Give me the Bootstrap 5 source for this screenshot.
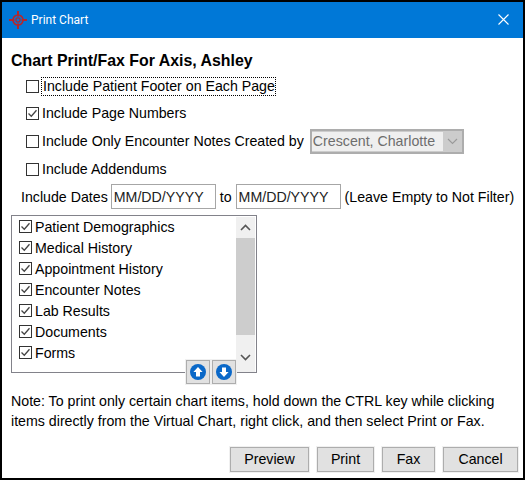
<!DOCTYPE html>
<html lang="en"><head><meta charset="utf-8"><title>Print Chart</title>
<link href="https://cdn.jsdelivr.net/npm/bootstrap@5.3.0/dist/css/bootstrap.min.css" rel="stylesheet">
<style>
html,body{height:100%;margin:0;background:#000;overflow:hidden}
body{font-family:"Liberation Sans",Arial,sans-serif;font-size:14.2px;color:#000;line-height:18px}
.win{margin:2px;width:521px;height:476px;background:#fff}
.tbar{height:36px;background:#0078d7;color:#fff;font-family:Roboto,"Noto Sans",sans-serif;font-size:12px;padding-left:7px}
.tbar .ttl{margin-left:4px}
.tbar .cls{margin-left:auto;margin-right:14px;margin-top:-2px}
.main{padding:0 5px 0 9px}
.head{font-size:15.9px;font-weight:700;margin:14px 0 0;line-height:18px;height:18px}
.opts{margin-top:3px;padding-left:15px}
.opt{height:28px}
.opt.o1{height:26px}
.cbx.form-check-input{appearance:none;width:13px;height:13px;margin:0 3px 0 0;border:1px solid #333;border-radius:0;background-color:#fff;flex:none}
.cbx.form-check-input:checked{background-color:#fff;border-color:#333;background-image:url("data:image/svg+xml,%3Csvg xmlns='http://www.w3.org/2000/svg' viewBox='0 0 11 11'%3E%3Cpath d='M1.500 5.500l2.800 2.800 5.200-6' fill='none' stroke='%23444' stroke-width='1.300'/%3E%3C/svg%3E");background-size:11px 11px;background-position:center}
.focusbox{outline:1px dotted #000;outline-offset:0;padding:0 0 0 1px;line-height:17px}
.picker{width:154px;height:25px;margin-left:6px;border:2px solid #adadad;background:#cccccc;color:#6d6d6d;position:relative;display:flex}
.picker .val{flex:1;background:#efefef;padding:0 0 0 1px;margin:1px 0;line-height:19px}
.picker .arr{width:19px;display:flex;align-items:center;justify-content:center}
.dates{height:25px;margin-top:1px;padding-left:10px;gap:0}
.lbl-d{margin-right:3px}
.dfield.form-control{width:105px;height:25px;border:1px solid #a6a6a6;border-radius:0;padding:0 2px;font-size:14.2px;line-height:18px;color:#222;background:#fff;box-shadow:none}
.dfield.form-control::placeholder{color:#222;opacity:1}
.listwrap{position:relative;margin:6px 0 0 0;width:246px;height:158px}
.lbox{width:100%;height:100%;border:1px solid #82828a;display:flex;background:#fff}
.items{flex:1;padding:0 0 0 7px}
.itm{height:21px;display:flex;align-items:center}
.sbar{width:19px;margin:1px 1px 0 0;display:flex;flex-direction:column;background:#f0f0f0}
.sbar .end{height:21px;display:flex;align-items:center;justify-content:center}
.sbar .thumb{height:97px;background:#cdcdcd}
.sbar .rest{flex:1}
.sbar .end.b{height:24px;padding-bottom:6px}
.movers{position:absolute;left:174px;top:144px;display:flex;gap:2px;background:#f0f0f0;padding:1px}
.mv{width:24px;height:24px;background:#e1e1e1;border:1px solid #adadad;display:flex;align-items:center;justify-content:center}
.note{margin:18px 0 0 0;line-height:20px;height:40px}
.acts{margin-top:16px;gap:8px}
.act.btn{height:25px;background:#e1e1e1;border:1px solid #adadad;border-radius:0;padding:0;font-size:14.2px;line-height:23px;color:#000;outline:1px solid #f0f0f0}
.a1.btn{width:79px}.a2.btn{width:57px}.a3.btn{width:53px}.a4.btn{width:75px}
</style></head><body>
<div class="win d-flex flex-column">
  <div class="tbar d-flex align-items-center">
    <svg width="18" height="18" viewBox="0 0 20 20"><g fill="none" stroke="#b5262c"><circle cx="10" cy="10" r="5.600" stroke-width="1.800"/><circle cx="10" cy="10" r="2.300" stroke-width="1.400"/><path d="M10 0v6M10 14v6M0 10h6M14 10h6" stroke-width="2.200"/></g></svg>
    <span class="ttl">Print Chart</span>
    <svg class="cls" width="11" height="11" viewBox="0 0 11 11"><path d="M.5.5l10 10M10.500.5l-10 10" stroke="#fff" stroke-width="1.100" fill="none"/></svg>
  </div>
  <div class="main flex-grow-1">
    <div class="head">Chart Print/Fax For Axis, Ashley</div>
    <div class="opts">
      <div class="opt o1 d-flex align-items-center"><input class="cbx form-check-input" type="checkbox"><span class="focusbox">Include Patient Footer on Each Page</span></div>
      <div class="opt d-flex align-items-center"><input class="cbx form-check-input" type="checkbox" checked><span>Include Page Numbers</span></div>
      <div class="opt d-flex align-items-center"><input class="cbx form-check-input" type="checkbox"><span>Include Only Encounter Notes Created by</span>
        <div class="picker"><span class="val">Crescent, Charlotte</span><span class="arr"><svg width="11" height="7" viewBox="0 0 11 7"><path d="M1 1l4.500 4.500L10 1" fill="none" stroke="#9a9a9a" stroke-width="1.100"/></svg></span></div>
      </div>
      <div class="opt d-flex align-items-center"><input class="cbx form-check-input" type="checkbox"><span>Include Addendums</span></div>
    </div>
    <div class="dates d-flex align-items-center">
      <span class="lbl-d">Include Dates</span><input class="dfield form-control" placeholder="MM/DD/YYYY"><span class="mx-1">to</span><input class="dfield form-control" placeholder="MM/DD/YYYY"><span class="ms-1">(Leave Empty to Not Filter)</span>
    </div>
    <div class="listwrap">
      <div class="lbox">
        <div class="items">
          <div class="itm"><input class="cbx form-check-input" type="checkbox" checked><span>Patient Demographics</span></div>
          <div class="itm"><input class="cbx form-check-input" type="checkbox" checked><span>Medical History</span></div>
          <div class="itm"><input class="cbx form-check-input" type="checkbox" checked><span>Appointment History</span></div>
          <div class="itm"><input class="cbx form-check-input" type="checkbox" checked><span>Encounter Notes</span></div>
          <div class="itm"><input class="cbx form-check-input" type="checkbox" checked><span>Lab Results</span></div>
          <div class="itm"><input class="cbx form-check-input" type="checkbox" checked><span>Documents</span></div>
          <div class="itm"><input class="cbx form-check-input" type="checkbox" checked><span>Forms</span></div>
        </div>
        <div class="sbar">
          <div class="end"><svg width="11" height="7" viewBox="0 0 11 7"><path d="M1 6l4.500-4.500L10 6" fill="none" stroke="#555" stroke-width="1.600"/></svg></div>
          <div class="thumb"></div>
          <div class="rest"></div>
          <div class="end b"><svg width="11" height="7" viewBox="0 0 11 7"><path d="M1 1l4.500 4.500L10 1" fill="none" stroke="#555" stroke-width="1.600"/></svg></div>
        </div>
      </div>
      <div class="movers">
        <div class="mv"><svg width="16" height="16" viewBox="0 0 16 16"><circle cx="8" cy="8" r="8" fill="#0a68c8"/><path d="M8 3l4.600 5H10v4.500H6V8H3.400z" fill="#fff"/></svg></div>
        <div class="mv"><svg width="16" height="16" viewBox="0 0 16 16"><circle cx="8" cy="8" r="8" fill="#0a68c8"/><path d="M8 13L3.400 8H6V3.500h4V8h2.600z" fill="#fff"/></svg></div>
      </div>
    </div>
    <div class="note">Note: To print only certain chart items, hold down the CTRL key while clicking<br>items directly from the Virtual Chart, right click, and then select Print or Fax.</div>
    <div class="acts d-flex justify-content-end">
      <button class="act btn a1" type="button">Preview</button>
      <button class="act btn a2" type="button">Print</button>
      <button class="act btn a3" type="button">Fax</button>
      <button class="act btn a4" type="button">Cancel</button>
    </div>
  </div>
</div>
<script src="https://cdn.jsdelivr.net/npm/bootstrap@5.3.0/dist/js/bootstrap.bundle.min.js"></script>
</body></html>
